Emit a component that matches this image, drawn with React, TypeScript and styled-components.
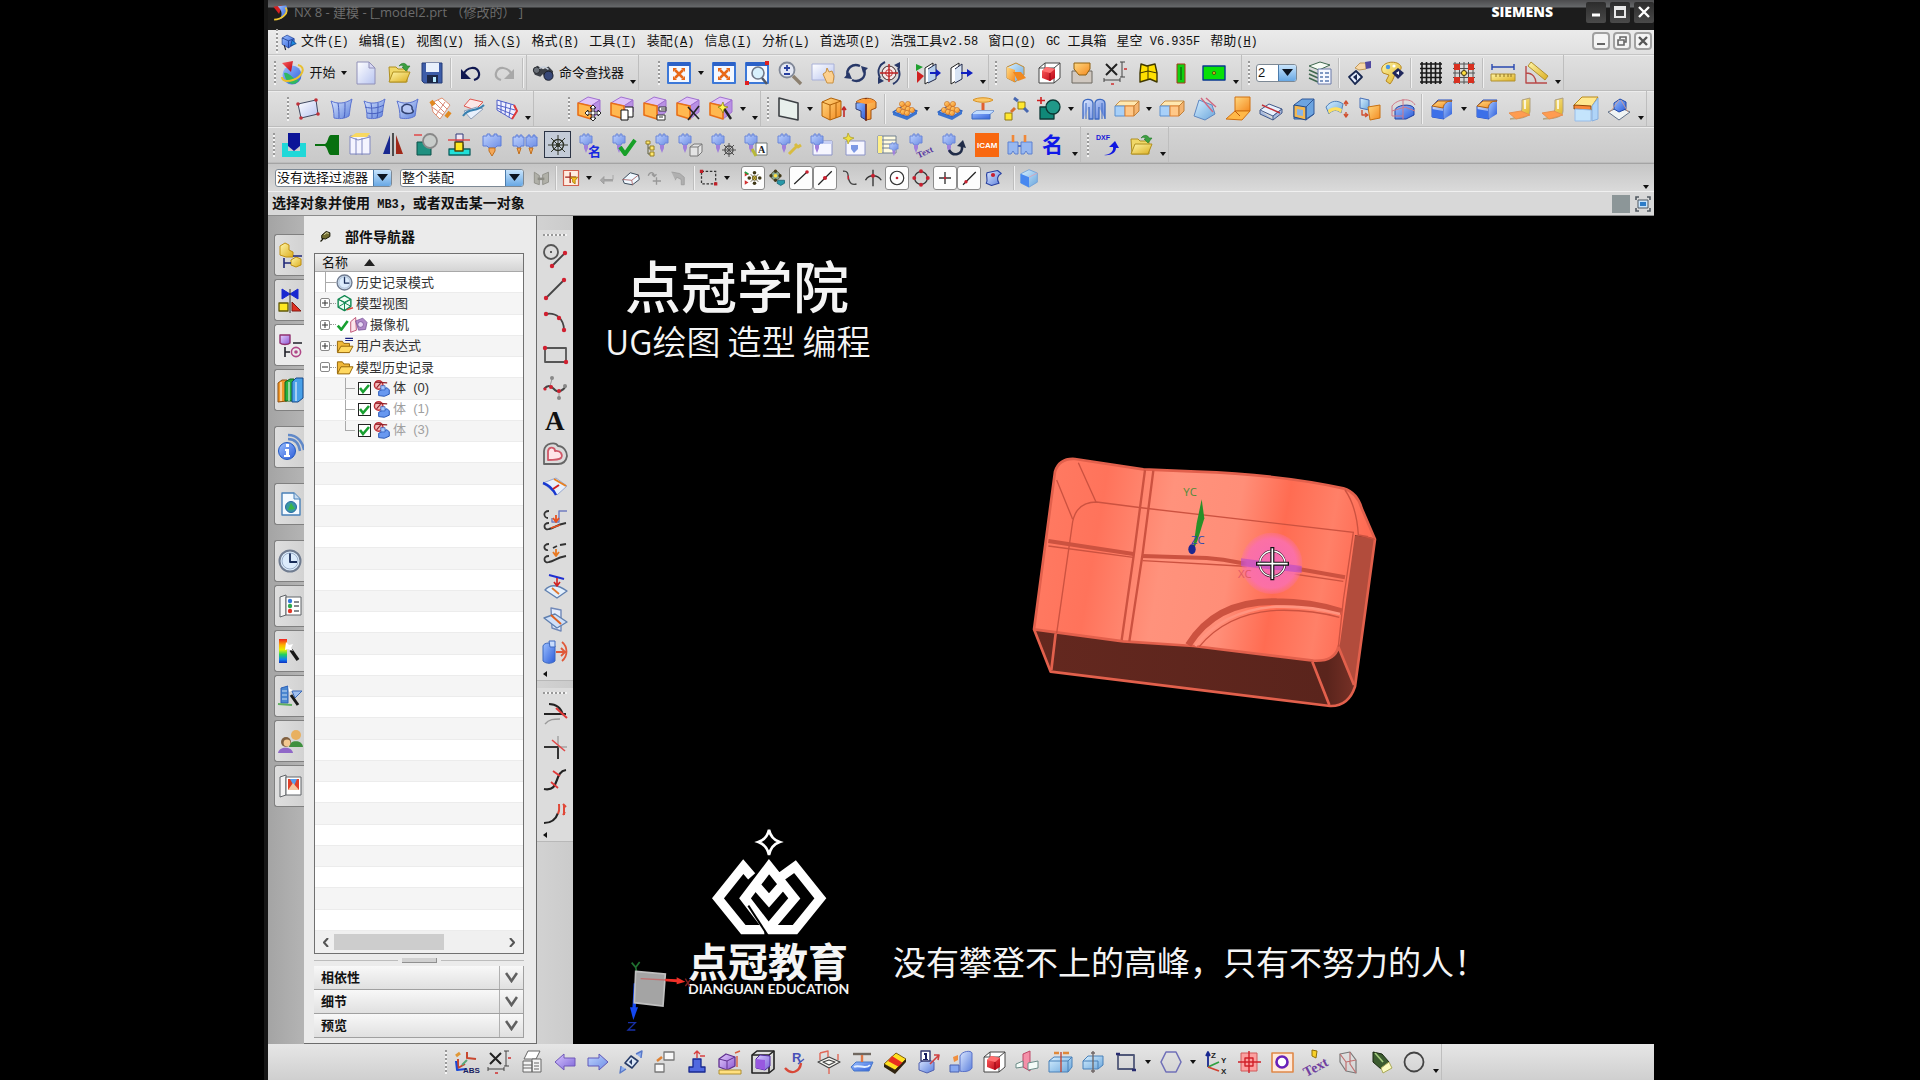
import React, { ReactNode } from 'react';
import styled, { createGlobalStyle, css } from 'styled-components';

const GlobalStyle = createGlobalStyle`
  * { box-sizing: border-box; }
  body { margin: 0; background: #000; }
  button { font: inherit; color: inherit; }
`;

const sans = '"Liberation Sans", "Noto Sans CJK SC", sans-serif';

/* ---------- drawing helpers ---------- */

const p = (d: string, fill = 'none', stroke = 'none', w = 1) => (
  <path d={d} fill={fill} stroke={stroke} strokeWidth={w} strokeLinejoin="round" />
);
const c = (cx: number, cy: number, r: number, fill = 'none', stroke = 'none', w = 1) => (
  <circle cx={cx} cy={cy} r={r} fill={fill} stroke={stroke} strokeWidth={w} />
);
const t = (x: number, y: number, size: number, fill: string, s: string, family = 'Liberation Sans') => (
  <text x={x} y={y} fontSize={size} fill={fill} fontWeight="bold" fontFamily={`"${family}", "Noto Sans CJK SC", sans-serif`}>{s}</text>
);

const Defs = styled.svg`
  position: absolute;
  width: 0;
  height: 0;
`;

const ramps: Record<string, [string, string]> = {
  blue: ['#dce8ff', '#5b7fdc'],
  mid: ['#c0d4ff', '#6c8ce4'],
  deep: ['#9cc0ff', '#2c5cd8'],
  orange: ['#ffd880', '#f48a20'],
  purple: ['#e6d0ff', '#8a55d0'],
  violet: ['#d9c8ff', '#7c63d8'],
  yellow: ['#fff6a8', '#dcae20'],
  gray: ['#f4f4f4', '#9c9c9c'],
  red: ['#ff6060', '#b80010'],
  sky: ['#d8f0ff', '#6aa6dc'],
  pale: ['#ffffff', '#b8c4f0'],
};

function Gradients() {
  return (
    <Defs aria-hidden="true">
      <defs>
        {Object.entries(ramps).map(([id, [a, b]]) => (
          <linearGradient key={id} id={id} x1="0" y1="0" x2="1" y2="1">
            <stop offset="0" stopColor={a} />
            <stop offset="1" stopColor={b} />
          </linearGradient>
        ))}
        <linearGradient id="rainbow" x1="0" y1="0" x2="0" y2="1">
          <stop offset="0" stopColor="#f02020" />
          <stop offset=".25" stopColor="#ffb000" />
          <stop offset=".45" stopColor="#e8f000" />
          <stop offset=".65" stopColor="#20d060" />
          <stop offset=".85" stopColor="#1080f0" />
          <stop offset="1" stopColor="#1030c0" />
        </linearGradient>
      </defs>
    </Defs>
  );
}

const u = (id: string) => `url(#${id})`;

const cube = (
  <>
    {p('M1 6L11 0L23 3L14 9Z', '#e0c4f8', '#a070d0')}
    {p('M14 9L23 3V15L14 22Z', '#b890e4', '#a070d0')}
    {p('M1 6L14 9V22L1 18Z', '#ffb850', '#e87018', 1.6)}
  </>
);
const clamp = (
  <>
    {p('M1 3H4V1H6V3H8V1H10V3H13V10H10L9 12H5L4 10H1Z', u('mid'), '#6a86d8')}
    {p('M5 12H9V15L7 20L5 15Z', '#a080dc')}
  </>
);
const fitFrame = (
  <>
    {p('M1 2H23V22H1Z', '#f4f8ff', '#3c78d8', 2)}
    {p('M1 1H23V5H1Z', '#2c62c8')}
  </>
);
const tray = (
  <>
    {p('M0 15L10 9L24 14L14 20Z', '#9cc4f4', '#2e62c0', 1.4)}
    {p('M0 15L14 20L24 14V17L14 23L0 18Z', '#3c74d0')}
    {[[6, 13], [11, 10], [10, 15], [15, 12], [19, 13], [14, 16], [9, 7], [15, 7]].map(([x, y]) => (
      <circle key={`${x}-${y}`} cx={x} cy={y} r="2.6" fill={u('orange')} stroke="#c05808" strokeWidth=".5" />
    ))}
  </>
);
const splitBox = (
  <>
    {p('M0 9L5 4H24L19 9Z', '#ffe8b0', '#c89048')}
    {p('M0 9H10V19H0Z', '#a8d0f8', '#5a90d0')}
    {p('M10 9H19V19H10Z', '#ffc888', '#e08030')}
    {p('M19 9L24 4V14L19 19Z', '#f4b470', '#c08038')}
  </>
);
const blend = (
  <>
    {p('M2 9L8 3H22L20 7C17 6 14 8 14 11V22L2 20Z', u('blue'), '#2850c0')}
    {p('M2 9L8 4H22C17 4 14 6 13 11L2 9Z', u('orange'), '#b06010')}
    {p('M14 22V11C14 7 17 5 22 5V17Z', u('deep'))}
    {p('M2 12L13 14V22L2 20Z', '#3c70e8')}
  </>
);
const fillet = (
  <>
    {p('M14 3L22 1V14C22 20 14 22 2 22C11 20 14 16 14 10Z', u('yellow'), '#b0a080')}
    {p('M1 16L13 14L22 18L8 22Z', '#ff9c50', '#e89050')}
    {p('M17 3V12', 'none', '#fff', 1.5)}
  </>
);
const boxRed = (
  <>
    {p('M2 7L8 2H23V17L17 22H2Z', '#fff', '#444')}
    {p('M2 7H17V22M17 7L23 2M8 2V8', 'none', '#444')}
    {p('M5 10L9 6L18 8V17L13 20L5 17Z', u('red'))}
    {p('M5 10L9 6L18 8L13 12Z', '#ff7070')}
    {p('M13 12V20', 'none', '#900010')}
  </>
);
const dims = (
  <>
    {p('M3 3L14 14M14 3L3 14', 'none', '#222', 2)}
    {p('M19 1V16M17 1H22M17 16H22M1 19H17M1 17V21M17 17V21', 'none', '#444')}
    {p('M21 8H24M8 23H11', 'none', '#d03030', 1.6)}
  </>
);
const folder = (
  <>
    {p('M2 6H9L11 8H20V21H3Z', '#f0d868', '#b09020')}
    {p('M2 21L6 11H23L19 21Z', u('yellow'), '#b09020')}
    {p('M12 5C15 1 19 2 20 5L23 5L19 10L15 6H17C16 4 14 4 12 5Z', '#3ca040', '#207828', 0.6)}
  </>
);
const surface = p('M2 4C8 7 16 7 23 2C21 9 21 14 20 19C15 22 10 22 5 21C5 15 4 9 2 4Z', u('blue'), '#5c74d0');
const sheetDoc = p('M3 8H22V22H3Z', '#f6f6ff', '#8c94c8');

const icons: Record<string, ReactNode> = {
  logo: <>{p('M2 4L14 2L10 14Z', '#d82020')}{p('M8 3L20 2C24 8 21 18 10 22C15 16 15 10 8 3Z', u('deep'))}{p('M19 5C25 12 14 22 3 22', 'none', '#f0c830', 2.5)}</>,
  part: <>{p('M3 7L10 3L20 8V16L12 21L3 16Z', u('deep'), '#153c98')}{p('M3 7L12 11L20 8M12 11V21', 'none', '#0f2f80')}{p('M17 10L23 15L15 18Z', '#1e8ae0', '#104080')}{p('M6 17L8 24', 'none', '#223', 1.6)}</>,
  start: <>{c(12, 14, 9.5, u('deep'))}{p('M4 12C9 10 14 20 19 19C15 26 6 24 4 12Z', '#30b860')}{p('M2 2L13 0L11 11Z', u('red'))}{p('M18 4C27 6 22 16 13 19C7 21 2 20 2 16', 'none', '#e8c030', 2)}</>,
  file: <>{p('M3 1H15L21 7V23H3Z', u('pale'), '#9090b8')}{p('M15 1V7H21Z', '#d8d8f4', '#9090b8')}</>,
  open: folder,
  save: <>{p('M2 2H22V22H4L2 20Z', '#3c5ca8', '#253c78')}{p('M6 2H19V11H6Z', '#e8f0fc')}{p('M7 14H18V22H7Z', '#1c2848')}{p('M13 16H16V21H13Z', '#b8ecff')}</>,
  undo: <>{p('M4 14C8 5 18 5 20 12C21 16 18 18 15 19', 'none', '#101850', 2.2)}{p('M2 8V18H12Z', '#101850')}</>,
  redo: <>{p('M20 14C16 5 6 5 4 12C3 16 6 18 9 19', 'none', '#a8a8a8', 2.2)}{p('M22 8V18H12Z', '#a8a8a8')}</>,
  binoculars: <>{p('M1 8L6 4L12 8L18 5L23 10L22 18L15 20L12 13L9 16L3 14Z', '#3c4048')}{c(18, 15, 5, '#384878', '#181c28')}{c(5, 9, 3.5, '#6a7078', '#24262c')}{p('M8 7L13 5L18 8', 'none', '#c8d0dc', 1.5)}</>,
  fit: <>{fitFrame}{p('M8 9L16 17M16 9L8 17', 'none', '#e86818', 2.5)}{p('M6 7H10L6 11ZM18 7V11L14 7ZM18 19H14L18 15ZM6 19V15L10 19Z', '#e86818')}</>,
  zoomWindow: <>{fitFrame}{c(13, 12, 6, '#d8f0fc', '#707888', 1.6)}{p('M17 17L22 23', 'none', '#505868', 2.5)}{p('M0 20H4V24H0ZM20 0H24V4H20Z', '#e02020')}</>,
  zoom: <>{c(9, 9, 7.5, '#e4e8f4', '#808898', 1.8)}{p('M15 15L23 23', 'none', '#8c8070', 3.4)}{p('M9 4V10M6 7H12M6 13H12', 'none', '#2840a0', 1.8)}</>,
  pan: <>{p('M1 3H23V19H1Z', u('pale'), '#a8b0d8')}{p('M12 13L15 11L16 7L18 11L21 10L23 15L22 22H16Z', '#fcd090', '#c89040')}</>,
  rotate: <>{p('M4 16C1 7 9 2 16 5M20 8C23 17 15 22 8 19', 'none', '#283868', 2.4)}{p('M19 12L24 7L17 5ZM0 17L5 11L8 18Z', '#283868')}</>,
  rotateTarget: <>{c(12, 12, 7, '#f4e8e8', '#402828')}{c(12, 12, 3.4, 'none', '#c03030')}{p('M12 3V21M3 12H21', 'none', '#c02020', 1.4)}{p('M3 17C-1 8 4 3 8 1M21 7C25 16 20 21 16 23', 'none', '#283868', 2)}{p('M17 4L23 1V8ZM7 20L1 23V16Z', '#283868')}</>,
  doorFlag: <>{p('M9 7L17 2V18L9 23Z', '#fff', '#202020')}{p('M12 8L20 3V18L12 22', '#b8d0ec', '#202848')}{p('M14 11H20V8L25 12L20 16V13H14Z', '#1020c0')}{p('M0 3L7 6L0 10Z', '#20a030')}{p('M1 10V22L8 15Z', '#d02020')}</>,
  door: <>{p('M2 7L10 2V18L2 23Z', '#fff', '#202020')}{p('M6 8L13 3V18L6 22', '#d8e4f4', '#202848')}{p('M12 11H18V8L24 12L18 16V13H12Z', '#1020c0')}</>,
  extract: <>{p('M3 6L12 2L20 6V14L11 21L3 17Z', u('sky'), '#c08830')}{p('M3 6L11 9V21L3 17Z', u('orange'))}{p('M9 11L17 11L22 17L14 20Z', '#f08820')}</>,
  boxRed,
  pocket: <>{p('M2 10H22V22H2Z', '#d0c8c0', '#6c6860')}{p('M4 2H20V8L16 14H9L4 8Z', u('orange'), '#906010')}</>,
  dims,
  yellowPart: <>{p('M5 3L11 5L19 3L21 12L21 21L14 18L4 21V12Z', '#ffe000', '#403800', 1.4)}{p('M4 12L12 10L21 12M12 4V19', 'none', '#403800')}</>,
  greenBar: <>{p('M8 3H16V22H8Z', '#10d010', '#a83818')}{p('M12 6V19', 'none', '#08480c')}</>,
  greenRect: <>{p('M1 5H23V19H1Z', '#08e008', '#083890', 1.4)}{c(12, 12, 1.6, '#e0b010', '#406010')}</>,
  layers: <>{p('M1 5L12 1L22 4L11 9Z', '#f6fcf4', '#406850')}{p('M1 9L10 13M1 13L10 17M1 17L10 21', 'none', '#406850', 1.6)}{p('M10 8H23V23H10Z', '#f6f8ff', '#6878a8')}{p('M12 12H15M17 12H21M12 16H15M17 16H21M12 20H15M17 20H21', 'none', '#5878b0', 1.4)}</>,
  handDiamond: <>{p('M2 16L9 10L15 16L8 23Z', '#e4ecfc', '#182850', 1.8)}{p('M6 16L10 13V20Z', '#182850')}{p('M8 7L13 2L19 2V8L12 9Z', '#f8d8a8', '#c09858')}{p('M18 1L24 0V7L19 8Z', '#5048a0')}</>,
  palette: <>{p('M3 12C-2 5 8 -1 17 2C24 5 21 10 17 11C14 12 15 17 10 23L6 20L9 14Z', u('yellow'), '#b88820')}{c(8, 6, 2.2, '#4898e8')}{c(14, 5, 1.6, '#fff')}{p('M12 12L18 7L24 12L18 18Z', '#20285c')}{p('M16 12L19 10V14Z', '#fff')}</>,
  grid: <>{p('M3 1V23M7.5 1V23M12 1V23M16.5 1V23M21 1V23M1 3H23M1 7.5H23M1 12H23M1 16.5H23M1 21H23', 'none', '#181818', 1.6)}</>,
  gridSnap: <>{p('M3 1V23M7.5 1V23M12 1V23M16.5 1V23M21 1V23M1 3H23M1 7.5H23M1 12H23M1 16.5H23M1 21H23', 'none', '#505050')}{p('M2 3H8V9H2ZM16 3H22V9H16ZM2 16H8V22H2ZM16 16H22V22H16Z', '#d83020')}{c(12, 12, 2.5, '#ffe040', '#403010')}</>,
  ruler: <>{p('M0 13H24V20H0Z', u('yellow'), '#b09030')}{p('M1 6H23M1 3V9M23 3V9', 'none', '#2848b0', 1.4)}{p('M5 13V16M9 13V16M13 13V16M17 13V16M20 13V16', 'none', '#907020')}</>,
  angle: <>{p('M7 1L24 15L21 19L4 5Z', u('yellow'), '#b09030')}{p('M2 5V22H23M2 12C9 12 12 17 12 22', 'none', '#b84848', 1.4)}</>,

  plane4: <>{p('M2 7L20 3L22 17L5 21Z', u('pale'), '#404860')}{[[2, 7], [20, 3], [22, 17], [5, 21]].map(([x, y]) => <circle key={x} cx={x} cy={y} r="1.8" fill="#c03038" />)}</>,
  surfRuled: <>{surface}{p('M9 6C10 12 10 17 10 21M16 6C16 12 16 17 15 21', 'none', '#4860c0')}</>,
  surfMesh: <>{surface}{p('M9 6C10 12 10 17 10 21M16 6C16 12 16 17 15 21M3 10C10 12 16 11 22 8M5 16C10 17 16 17 21 14', 'none', '#4860c0')}</>,
  surfN: <>{surface}{p('M7 10C11 5 18 8 17 12C22 17 10 18 7 14Z', '#b8c8f4', '#304070', 1.5)}</>,
  surfSwept: <>{p('M3 6L14 1L22 8L12 22L5 15Z', '#fff', '#e09070')}{p('M6 5L16 15M10 3L19 12M4 10L15 18M17 5L8 18', 'none', '#d88878')}{p('M3 4L6 8M22 15L18 20', 'none', '#e08820', 4)}</>,
  surfBlend: <>{p('M9 2L22 5L14 13L3 9Z', '#fce8e8', '#e05850')}{p('M3 14L16 10L22 12L10 22Z', '#e8f0fc', '#90a0b8')}{p('M2 19C8 10 15 16 23 8', 'none', '#3880b0', 2)}</>,
  surfGrid: <>{p('M3 3L20 8L23 14L18 22L3 13Z', '#f0f0ff', '#5060c8')}{p('M7 4L7 16M12 5L11 18M17 7L15 20M3 8L21 13M3 11L20 18', 'none', '#5060c8')}{p('M20 8L23 14L18 22', 'none', '#e03838', 2)}</>,
  cubeMove: <>{cube}{p('M16 8L19 11H17V15H21V13L24 16L21 19V17H17V21H19L16 24L13 21H15V17H11V19L8 16L11 13V15H15V11H13Z', '#fff', '#111', 0.9)}</>,
  cubeCopy: <>{cube}{p('M11 13H18V23H11ZM15 10H23V20H18', '#fff', '#111')}</>,
  cubeList: <>{cube}{p('M16 10H23V14H16ZM14 18H22V23H14Z', '#fff', '#333')}{p('M18 12H23M16 20H20', 'none', '#333')}</>,
  cubeDelete: <>{cube}{p('M12 10L23 22M23 9L12 23', 'none', '#222', 1.6)}</>,
  cubeWand: <>{cube}{p('M14 10L22 22', 'none', '#222', 2.4)}{p('M14 5L15 9L19 10L15 12L14 16L12 12L9 10L12 9Z', '#fff850', '#807810', 0.7)}</>,
  datum: p('M3 1L22 6V23L3 19Z', '#e8f0ec', '#3c4044', 1.6),
  extrude: <>{p('M1 5L10 1L20 4L20 19L9 23L1 19Z', u('orange'), '#b06008')}{p('M9 8V23M15 6V21M1 5L9 8L20 4', 'none', '#b06008')}{p('M23 20V11M21 13L23 10L25 13', 'none', '#c02828', 1.6)}</>,
  revolve: <>{p('M2 5C8 0 18 0 22 5V11L17 13V22L12 23V4Z', u('orange'), '#a05010')}{p('M2 6L12 5V23L7 20V14L2 12Z', u('deep'), '#303c70')}{p('M12 1V24', 'none', '#702010', 1.4)}{p('M2 5C8 1 18 1 22 5L12 7Z', '#ff9c38')}</>,
  tray,
  stamp: <>{p('M2 3C6 0 18 0 22 3C18 6 6 6 2 3Z', '#fcc868', '#d89020')}{p('M12 6V13', 'none', '#e06030', 3)}{p('M1 17L5 14H23L19 17V22H1Z', u('deep'), '#3868c0')}{p('M1 17L5 14H23L19 17Z', '#c0dcff')}</>,
  chain: <>{p('M1 16H8V23H1ZM14 5H21V12H14Z', '#ffe830', '#907810')}{p('M7 15L11 11', 'none', '#d87030', 3)}{p('M10 1L14 4M20 11L24 15', 'none', '#4868b0', 3)}</>,
  unite: <>{p('M3 10H17V22H3Z', '#108878', '#0c3834', 1.3)}{c(16, 10, 7, '#209888', '#0c3834', 1.3)}{p('M4 0V7M0 3.5H8', 'none', '#d02020', 1.6)}</>,
  rib: <>{p('M1 22V7C1 1 10 1 11 6V22H7V10M23 22V7C23 1 14 1 13 6V22H17V10', u('blue'), '#3c68c0', 1.3)}{p('M4 6V22M20 6V22', 'none', '#3c68c0')}</>,
  splitBox,
  sheet: <>{p('M6 3L19 8L22 17L12 23L1 19Z', u('sky'), '#6088c0')}{p('M8 1L20 15M13 1L23 10', 'none', '#d06880', 1.4)}</>,
  book: <>{p('M9 0H24V14H9Z', u('orange'), '#d07010')}{p('M0 22L9 14H24L16 23Z', '#ffb848', '#d07010')}{p('M9 14L14 19', 'none', '#c05808')}</>,
  slab: <>{p('M1 13L10 7L23 12L14 19Z', '#e8f0fc', '#405888')}{p('M1 13V17L14 23V19L23 12V16L14 23', '#a8bce0', '#405888')}{p('M3 8L21 16', 'none', '#c03038', 1.4)}</>,
  clipBox: <>{p('M2 8L10 2H22V17L14 22H2Z', '#6ca4e0', '#305898')}{p('M2 8L14 10V23L2 20Z', '#f4b850', '#204888')}{p('M5 12L11 13V19L5 18Z', '#88b4e8')}{p('M14 10L22 2M14 10V23L22 17', 'none', '#305898')}</>,
  bend: <>{p('M1 10C6 3 13 3 18 7L16 16C12 12 7 13 4 17Z', u('sky'), '#5080b8')}{p('M4 17C7 13 12 12 16 16L17 12C12 9 6 10 3 13Z', '#ffe060')}{p('M21 4V9M21 15V20M19 7L21 4L23 7M19 17L21 20L23 17', 'none', '#d05030', 1.4)}</>,
  offset: <>{p('M2 1L11 3V13L2 11Z', u('sky'), '#4870b8')}{p('M10 10L22 8V21L12 23Z', u('orange'), '#c87010')}{p('M4 13V18H9M7 16L10 18L7 20', 'none', '#d05030', 1.4)}</>,
  dome: <>{p('M4 20V13C5 8 20 6 23 11V18L15 22H4Z', u('deep'), '#2040a0')}{p('M1 19V9C6 2 20 0 24 8M1 14L14 10L24 14M12 2V22M1 19H12', 'none', '#d07888')}</>,
  blend,
  fillet,
  chamfer: <>{p('M0 8L8 0H24L18 9L18 13L0 9Z', '#ffe890', '#b88818')}{p('M0 8L17 9V13L0 12Z', '#f88838', '#904808')}{p('M1 12L17 13V24H1Z', '#c4e4fc', '#98bce8')}{p('M18 9L24 1V22L18 24Z', '#b0d4f8', '#88b0e0')}</>,
  cubePlane: <>{p('M1 15L12 10L23 15L12 23Z', '#f0f4f4', '#607088')}{p('M7 6L13 2L19 5V12L12 15L7 12Z', u('deep'), '#2048a8')}{p('M3 15L12 3M21 15L14 3', 'none', '#e0a080', 0.8)}</>,

  plunge: <>{p('M0 10H6V18H18V10H24V24H0Z', '#20d8d8')}{p('M6 0H18V13L12 18L6 13Z', '#0c1498')}</>,
  brush: p('M0 11H10C13 10 13 2 16 2H24V22H16C13 22 13 15 10 13H0Z', '#087010'),
  sheetBox: <>{p('M2 3H22V21H2Z', '#f4f4ff', '#8088c0')}{p('M8 5V22M14 5V22M2 4L10 7L22 4', 'none', '#8088c0')}{p('M2 4L8 0H22L19 4Z', '#f8d860')}</>,
  mirror: <>{p('M9 2V21H2Z', '#182890')}{p('M15 2V21H22Z', '#a02818')}{p('M12 0V23', 'none', '#181818', 1.4)}</>,
  subtract: <>{p('M3 9H17V22H3Z', '#209080', '#0c5048')}{c(16, 8, 7, '#c8ccca', '#888', 1.8)}{p('M0 2H8', 'none', '#e05050', 1.6)}</>,
  align: <>{p('M2 16H9V12H16V16H23V22H2Z', '#20e0d8', '#106060', 1.3)}{p('M8 9H16V18H8Z', '#ffe820', '#504008', 1.4)}{p('M9 1H16V8H9Z', '#f0e8f4', '#303878')}{p('M1 7H23', 'none', '#e04040', 1.4)}</>,
  spindle: <>{p('M3 3H7V1H10V3H14V1H17V3H21V13H17L15 15H9L7 13H3Z', u('mid'), '#5c7cd8')}{p('M9 15H15V18L12 23L9 18Z', '#f4a858', '#c07020')}</>,
  spindles: <>{p('M0 4H3V2H5V4H7V2H9V4H11V13H8L7 15H5L4 13H0ZM13 4H15V2H17V4H20V2H22V4H24V13H20L19 15H17L16 13H13Z', u('mid'), '#5c7cd8')}{p('M4 15H8L6 21ZM16 15H20L18 21Z', '#f4a858', '#c07020')}</>,
  wheel: <>{c(12, 12, 5.5, 'none', '#303428', 1.4)}{p('M12 2V22M2 12H22M5 5L19 19M19 5L5 19', 'none', '#303428')}{c(12, 12, 2, '#303428')}</>,
  clampName: <>{clamp}{t(9, 23, 13, '#1828e0', '名')}</>,
  clampCheck: <>{clamp}{p('M8 14L13 21L23 7', 'none', '#18a028', 4)}</>,
  clampTree: <><g transform="translate(10 0)">{clamp}</g>{p('M1 8H5V11H1ZM5 13H9V17H5ZM5 19H9V23H5Z', '#ffe870', '#988020')}{p('M3 11V21H5M3 15H5', 'none', '#606040')}</>,
  clampBox: <>{clamp}{p('M12 14L16 11H24V19L20 23H12Z', '#e4e4e4', '#787878')}{p('M12 14H20V23M20 14L24 11', 'none', '#787878')}</>,
  clampGear: <>{clamp}{c(18, 17, 4, 'none', '#505050', 1.4)}{p('M18 10V24M11 17H25M13 12L23 22M23 12L13 22', 'none', '#505050')}</>,
  clampA: <>{clamp}{p('M12 10H23V22H12Z', '#fff', '#707878')}{t(14, 20, 10, '#222', 'A', 'Liberation Serif')}{p('M8 16L12 23', 'none', '#b8b838', 3)}</>,
  clampWrench: <>{clamp}{p('M12 21L20 13M18 11L21 14L24 12', 'none', '#d8bc40', 3)}</>,
  clampWindow: <>{sheetDoc}{p('M3 8H22V11H3Z', '#c8d0f4')}{clamp}</>,
  windowStar: <>{sheetDoc}{p('M5 0L7 4L11 5L7 7L5 11L4 7L0 5L4 4Z', '#f0e040', '#a09010', 0.6)}{p('M8 12H15V16L11 20L8 16Z', '#7c98e4')}</>,
  clampTable: <>{p('M2 3H20V20H2Z', '#fffbe0', '#708090')}{p('M2 7H20M2 11H20M2 15H20M7 3V20', 'none', '#708090')}{p('M2 3H6V20H2Z', '#fff088')}<g transform="translate(13 9) scale(.7)">{clamp}</g></>,
  clampText: <>{clamp}<g transform="rotate(-25 16 18)">{t(7, 22, 9, '#5838a0', 'Text', 'Liberation Serif')}</g></>,
  clampReturn: <>{clamp}{p('M7 17C11 24 21 22 20 13', 'none', '#202c48', 2.6)}{p('M15 13L21 7L24 15Z', '#202c48')}</>,
  icam: <>{p('M0 0H24V24H0Z', '#f86810')}{t(2, 15, 8, '#fff', 'ICAM')}</>,
  twin: <>{p('M0 9H10V21H7L5 18L3 21H0ZM13 9H24V21H20L18 18L16 21H13Z', '#98b8f0', '#5c80d0')}{p('M5 2V9M17 2V9', 'none', '#f08838', 2.6)}{p('M10 13H13', 'none', '#4c70c8', 2)}</>,
  name: t(1, 19, 21, '#1018e8', '名'),
  dxf: <>{t(0, 7, 7, '#1818d8', 'DXF')}{p('M8 22C14 22 18 18 17 14H13L19 8L23 15H20C20 20 14 23 8 22Z', '#1018e0')}</>,

  sLink: <>{p('M4 5L10 9V20L4 18ZM14 8L21 5V17L14 20Z', '#b0b0a8', '#8c8c84')}{p('M8 13H16', 'none', '#8c8c84', 3)}</>,
  sSnap: <>{p('M3 3H21V21H3Z', '#ffece0', '#d06050', 1.4)}{p('M11 5V18M5 11H18', 'none', '#a02018', 1.6)}{p('M11 11H20L17 15V19L14 17V14Z', '#f8c020', '#a07808')}</>,
  sReturn: p('M20 8V14H8V10L3 15L8 20V16H20', '#a8a8a8', '#989898'),
  sSolid: <>{p('M1 14L11 5L22 8L23 14L14 21L3 19Z', '#f0f8ff', '#384858', 1.3)}{p('M1 14L13 15L22 8M13 15L14 21', 'none', '#a04848')}</>,
  sMove: p('M3 9C5 3 10 4 11 9M8 7L11 10L14 7M14 11V21M9 16H20', 'none', '#989898', 1.8),
  sGun: p('M2 4L13 6L19 11V21H15V14L9 11L7 15', '#b0b0b0', '#989898'),
  sMarquee: <>{<path d="M3 4H20V19H3Z" fill="none" stroke="#333" strokeWidth="1.5" strokeDasharray="3 2" />}{p('M1 2H5V6H1ZM18 17H22V21H18Z', '#c02028')}</>,
  mFlag: <>{p('M1 4L6 7L1 10ZM1 15L6 18L1 21Z', '#d03030')}{p('M1 4L6 7', 'none', '#20a040', 2)}{[[14, 5], [14, 19], [7, 12], [21, 12]].map(([x, y]) => <circle key={`${x}${y}`} cx={x} cy={y} r="2.4" fill="#403818" />)}{c(14, 12, 3, '#ffe040', '#403818')}{p('M9 7L19 17M19 7L9 17', 'none', '#403818')}</>,
  mGlobe: <>{c(10, 9, 6, '#88a890', '#484020')}{[[10, 3], [4, 9], [16, 9], [10, 15]].map(([x, y]) => <circle key={`${x}${y}`} cx={x} cy={y} r="2.2" fill="#403818" />)}{c(10, 9, 2.4, '#ffe040')}{p('M13 15H22V19L17 22L12 19Z', '#2898a8', '#186070')}</>,
  mEnd: <>{p('M3 20L20 4', 'none', '#222', 1.6)}{c(20, 4, 2.4, '#c82030')}</>,
  mMid: <>{p('M3 21L21 3', 'none', '#222', 1.6)}{c(12, 12, 2.8, '#c82030')}</>,
  mCurve: <>{p('M4 3C14 2 9 12 13 17C15 21 18 21 22 20', 'none', '#444', 1.8)}{p('M11 9V14', 'none', '#c82030', 2)}</>,
  mCross: <>{p('M12 1V23M2 15C6 7 18 7 23 15', 'none', '#333', 1.8)}{c(12, 9, 2.6, '#c82030')}</>,
  mCenter: <>{c(12, 12, 9, '#fff', '#333', 1.6)}{c(12, 12, 1.8, '#c82030')}</>,
  mQuad: <>{c(12, 12, 8.5, 'none', '#333', 1.6)}{[[12, 3], [12, 21], [3, 12], [21, 12]].map(([x, y]) => <circle key={`${x}${y}`} cx={x} cy={y} r="2.6" fill="#c82030" />)}</>,
  mPoint: <>{p('M12 4V20M4 12H20', 'none', '#333', 1.8)}{c(12, 12, 1.6, '#c82030')}</>,
  mOn: <>{p('M4 21L21 4', 'none', '#222', 1.6)}{c(8, 17, 2.2, '#c82030')}</>,
  mFace: <>{p('M4 5L18 2L23 6C17 9 17 14 20 19L10 22L3 19C6 14 2 10 4 5Z', u('blue'), '#2840a0', 1.5)}{c(12, 8, 2.8, '#c82030')}</>,
  mBox: <>{p('M2 7L12 2L22 6V17L12 23L2 18Z', u('sky'), '#70a0d8')}{p('M2 7L12 11V23L2 18Z', '#4888f0')}{p('M12 11L22 6', 'none', '#e0a0b0')}</>,

  rAssembly: <>{p('M2 3L7 0L11 2V7L15 9V14L8 14L2 12Z', u('yellow'), '#c09010')}{p('M13 17L18 14L23 16V22L18 24L13 22Z', u('yellow'), '#c09010')}{p('M6 15V25M6 20H13M15 13H24', 'none', '#202878', 1.6)}</>,
  rConstraint: <>{p('M4 1L12 6L4 11ZM20 1L12 6L20 11Z', '#1828d0', '#1828d0')}{p('M1 15H10V23H1Z', '#ffe820', '#605808', 1.3)}{p('M14 14L23 23H14Z', '#e03020', '#801810')}{p('M12 1V25', 'none', '#333')}</>,
  rPart: <>{p('M2 2H12V10C10 12 4 12 2 10Z', u('purple'), '#903070', 1.4)}{p('M15 10H24M7 14V24M7 19H12', 'none', '#202028', 1.6)}{c(18, 19, 4.6, 'none', '#b04888', 1.6)}{c(18, 19, 1.8, '#b04888')}</>,
  rBooks: <>{p('M0 5L4 2H9V23L0 24Z', '#f09828', '#905010')}{p('M7 4L12 1H16V23H7Z', '#28b040', '#106020')}{p('M14 4L18 0H25V20L20 24H14Z', '#48a0e8', '#184888')}{p('M3 4V23M11 4V23M18 4V23', 'none', '#fff', 1)}</>,
  rInfo: <>{c(9, 16, 8.5, u('deep'), '#2058c0')}{p('M8 9H11V12H8ZM7 14H11V20H12V22H6V20H8V16H7Z', '#fff')}{p('M10 4C18 4 21 9 22 16M10 0C20 0 25 8 26 15', 'none', '#6088c8', 2.4)}</>,
  rWeb: <>{p('M4 1H16L22 7V23H4Z', '#f4faff', '#4880b8', 1.4)}{p('M16 1V7H22', '#c8dcf0', '#4880b8')}{c(13, 15, 5.5, '#3898a0', '#2868a8')}{p('M10 18L13 11L17 17Z', '#38b848')}</>,
  rClock: <>{c(12, 12, 10.5, '#dcecfc', '#707c90', 2)}{p('M12 4V13H19', 'none', '#182c58', 1.8)}{c(12, 12, 8, 'none', '#8ca0bc', 0.8)}</>,
  rList: <>{p('M2 3L8 1V21L2 23Z', '#f4f4f4', '#606468')}{p('M8 3H23V21H8Z', '#fff', '#606468')}{c(12, 7, 2.2, '#3878d8')}{c(12, 12, 2.2, '#30a850')}{c(12, 17, 2.2, '#e03828')}{p('M16 8H21M16 12H21M16 17H21', 'none', '#606468', 1.3)}</>,
  rRainbow: <>{p('M1 0H9V24H1Z', u('rainbow'))}{p('M13 11L20 21', 'none', '#181818', 3.4)}{p('M8 3L11 6L15 5L13 9L15 12L10 10L7 11Z', '#fff')}</>,
  rBuild: <>{p('M3 4L10 2V19H3Z', '#4c88d0', '#2c60b8')}{p('M4 7H9M4 11H9M4 15H9', 'none', '#c8dcf4')}{p('M14 7H24L17 14Z', '#a0c0f0', '#3868b8')}{p('M13 11L20 21', 'none', '#181818', 3)}{p('M0 20L14 21', 'none', '#60b060', 2)}{p('M10 1L12 5L15 6L11 8Z', '#fff')}</>,
  rUsers: <>{c(18, 6, 5, '#e8b060')}{p('M11 18C11 11 24 10 25 18Z', '#409040')}{c(8, 13, 5, '#806040')}{c(9, 14, 3.4, '#f4c890')}{p('M0 24C1 17 14 17 15 24Z', '#9068c8')}</>,
  rPhoto: <>{p('M2 3L8 1V21L2 23Z', '#f4f4f4', '#606468')}{p('M8 3H23V21H8Z', '#fff', '#606468')}{p('M10 5H21V16H10Z', '#e04028')}{p('M12 5H19L16 12Z', '#58a0f0')}{p('M10 16L15 9L21 16Z', '#f4c8a0')}</>,

  vCircle: <>{c(8, 8, 7, 'none', '#555', 1.8)}{c(8, 8, 1, '#333')}{p('M9 22L22 9', 'none', '#444', 1.8)}{c(9, 22, 2.2, '#d02030')}{c(22, 9, 2.2, '#d02030')}</>,
  vLine: <>{p('M3 21L21 3', 'none', '#444', 1.8)}{c(3, 21, 2.2, '#d02030')}{c(21, 3, 2.2, '#d02030')}</>,
  vArc: <>{p('M3 4C13 2 21 9 21 20', 'none', '#444', 1.8)}{c(3, 4, 2.2, '#d02030')}{c(16, 8, 2.2, '#d02030')}{c(21, 20, 2.2, '#d02030')}</>,
  vRect: <>{p('M2 5H23V19H2Z', 'none', '#555', 1.8)}{c(2, 5, 2.2, '#d02030')}{c(23, 19, 2.2, '#d02030')}</>,
  vSpline: <>{p('M1 13C6 7 9 11 12 14S20 15 23 10', 'none', '#444', 2)}{p('M7 10L9 3M16 14L16 22', 'none', '#999')}{c(8, 11, 2, '#d02030')}{c(16, 15, 2, '#d02030')}{c(9, 2, 2, '#888')}{c(22, 10, 2, '#888')}{c(16, 22, 2, '#888')}{c(2, 13, 1.6, '#d02030')}</>,
  vText: t(2, 21, 27, '#111', 'A', 'Liberation Serif'),
  vOffset: <>{p('M1 22V9C2 0 13 0 15 4C21 4 24 10 24 14C23 20 19 22 15 22Z', 'none', '#666', 1.8)}{p('M5 18V9C6 4 12 5 12 9C18 8 20 13 18 16C16 18 12 18 5 18Z', '#ffe4e8', '#d05868', 1.8)}</>,
  vBridge: <>{p('M0 8L13 3L24 11L14 20Z', '#e8f0fc', '#98a8d0')}{p('M0 8C6 10 10 14 13 20', 'none', '#1838d0', 2.4)}{p('M11 4L23 11', 'none', '#e88020', 2)}{p('M10 14L16 10', 'none', '#d02020', 2)}</>,
  vJoin: <>{p('M6 3C-1 3 1 10 5 10M6 15C-1 15 1 23 6 21C12 20 12 17 23 15', 'none', '#333', 1.8)}{p('M9 10V14H16V3H24', 'none', '#707cc0', 1.4)}{p('M13 7V13M10 10L13 14L16 10M8 20L17 17', 'none', '#e85020', 1.8)}</>,
  vSplit: <>{p('M6 3C-1 3 1 10 5 9M10 7L14 5M17 4L23 3M6 15C-1 15 1 23 6 21C12 20 12 17 23 15', 'none', '#333', 1.8)}{p('M13 8V14M10 11L13 15L16 11', 'none', '#e87820', 1.8)}</>,
  vProject: <>{p('M6 1L21 5', 'none', '#2030d0', 2)}{p('M2 16C7 10 14 10 24 17L14 24Z', '#e4f0fc', '#6080b0', 1.4)}{p('M14 4V11M11 8L14 12L17 8', 'none', '#d02020', 1.6)}{p('M9 14L16 20', 'none', '#e07830', 1.8)}</>,
  vIntersect: <>{p('M8 1L18 3V24L9 21Z', '#e4ecfc', '#7088b8', 1.4)}{p('M1 11L12 7L24 15L14 21Z', '#d0e0f8', '#6080b0', 1.4)}{p('M8 8L18 17', 'none', '#e06020', 2)}</>,
  vWrap: <>{p('M0 6C1 2 10 2 12 6V21C9 24 3 24 0 21Z', u('deep'), '#3c68c0')}{p('M6 1H12V7H7Z', '#c8dcfc', '#3c68c0')}{p('M19 2C25 7 25 16 19 21M13 12H22M18 8L22 12L18 16', 'none', '#e05838', 1.8)}</>,
  vTrim1: <>{p('M6 2C14 2 18 6 20 13M1 12H23', 'none', '#222', 2)}{p('M13 6L24 16', 'none', '#e03838', 2)}{p('M2 22C6 17 11 17 17 17', 'none', '#999', 1.4)}</>,
  vTrim2: <>{p('M1 12H15V24', 'none', '#333', 2)}{p('M15 1V10M15 12H24', 'none', '#888')}{p('M9 5L22 16', 'none', '#e04848', 1.6)}</>,
  vTrim3: <>{p('M1 21C18 24 10 4 23 2', 'none', '#222', 2.2)}{p('M10 3L17 8M8 14L15 20', 'none', '#e03838', 1.8)}</>,
  vTrim4: <>{p('M1 22C8 22 13 18 15 12', 'none', '#222', 2.2)}{p('M15 13C17 9 16 6 16 3M21 4V14M20 3L23 6M20 14L22 11', 'none', '#e04838', 2)}</>,

  bCsys: <>{p('M4 9V18L11 14M13 2V8L22 9', 'none', '#c84830', 2)}{p('M2 11L3 20L12 19', 'none', '#1848d8', 2)}{p('M2 6L6 3', 'none', '#e09838', 3)}{p('M8 15L13 10', 'none', '#58a878', 2)}{t(9, 23, 8, '#182060', 'ABS')}</>,
  bLayers: <>{p('M8 1H20L16 9H4Z', '#fff', '#666')}{p('M3 11H12V22H3ZM12 9H21V22H12Z', '#f4f4f4', '#666')}{p('M3 15H12M3 18H12M14 13H19M14 16H19M14 19H19', 'none', '#666', 1.2)}</>,
  bLeft: p('M2 12L11 4V8H22V16H11V20Z', u('violet'), '#7058b8'),
  bRight: p('M22 12L13 4V8H2V16H13V20Z', u('mid'), '#6058b8'),
  bSwap: <>{p('M6 13L12 6L19 11L13 18Z', '#dce8f8', '#283c68', 1.6)}{p('M10 12L13 9V15Z', '#283c68')}{p('M17 4L23 1L22 8M7 19L1 23L2 16', '#90b0f0', '#5878c8', 1.4)}</>,
  bSquares: <>{p('M12 2H22V10H12ZM3 14H12V22H3Z', '#f8f8f8', '#777', 1.3)}{p('M5 11L10 7', 'none', '#e08030', 2.4)}</>,
  bTower: <>{p('M8 9H16V17H20V22H4V17H8Z', '#5068e0', '#182890', 1.3)}{p('M12 1V8M9 4L12 1L15 4M15 6H20', 'none', '#d84040', 1.4)}</>,
  bMeasure: <>{p('M1 9L8 4L17 7V16L9 20L1 17Z', u('purple'), '#603090', 1.3)}{p('M1 9L9 11V20M9 11L17 7', 'none', '#603090')}{p('M1 20H23V24H1Z', '#ffe080', '#b09030')}{p('M19 6V17M17 3L22 1', 'none', '#d86040', 1.4)}</>,
  bCubeFrame: <>{p('M1 5L6 1H23V19L18 23H1Z', 'none', '#222', 1.6)}{p('M1 5H18V23M18 5L23 1', 'none', '#222', 1.6)}{p('M5 9L9 5L19 6V16L14 20L5 18Z', u('violet'), '#5028a0')}{p('M5 9L14 10V20L5 18Z', '#9858e0')}</>,
  bRadius: <>{p('M1 18C8 26 16 21 17 13', 'none', '#d84838', 2.4)}{p('M14 14L20 9', 'none', '#4858b8', 1.4)}{t(8, 12, 13, '#4850b8', 'R')}</>,
  bBoxLines: <>{p('M1 12L12 7L23 12L12 18ZM6 12L12 10L18 12L12 15Z', '#f8f8f4', '#444', 1.2)}{p('M3 3V10M3 3L11 1V7M21 4V10M12 18V24', 'none', '#e06858', 1.4)}</>,
  bPlate: <>{p('M1 17L6 12H23L19 21H4Z', u('deep'), '#4878c8')}{p('M4 17C8 14 16 20 20 15', 'none', '#e4f0ff', 2)}{p('M3 4H21', 'none', '#706860', 2.4)}{p('M12 5V12', 'none', '#e07848', 2.4)}</>,
  bStripes: <>{p('M1 14L13 3L23 9L12 20Z', '#ffe020', '#806010')}{p('M5 11L16 17L20 13L9 6Z', '#e83020')}{p('M1 14L12 20L23 9V12L12 24L1 17Z', '#302410')}</>,
  bInfo: <>{p('M3 13L10 9L18 12V20L11 23L3 20Z', u('blue'), '#5060b0')}{p('M5 1H14V11H5Z', '#fff', '#333870', 1.4)}{p('M8 3H11V9H12V10H7V9H9V5H8Z', '#182060')}{p('M14 14L22 6M18 5L23 5L22 10', 'none', '#d04040', 1.6)}</>,
  bTube: <>{p('M11 6C13 1 22 0 23 3V18C21 22 13 22 11 21Z', u('blue'), '#5870c8')}{p('M1 15H10V22H1Z', '#88a8f0', '#4860b0')}{p('M4 7L9 5V10L5 12Z', '#f09040')}</>,
  bPlane: <>{p('M8 4L15 1V21L8 17Z', '#f490a8', '#c04868')}{p('M13 13L23 11V18L13 20ZM1 14L8 11V17L1 18Z', '#f4fcf8', '#6c8c88')}</>,
  bCut: <>{p('M1 11L6 7H24V17L20 22H1Z', u('sky'), '#4880b8')}{p('M1 11H20V22M20 11L24 7', 'none', '#4880b8')}{p('M13 2V22', 'none', '#c04838', 1.4)}{p('M6 3H11M15 3H21', 'none', '#e08838', 2.4)}</>,
  bMid: <>{p('M2 11L7 6H22V15L17 19H2Z', u('sky'), '#4880b8')}{p('M2 11H17V19', 'none', '#4880b8')}{p('M12 1V23M10 3H14M10 21H14', 'none', '#706868', 1.4)}</>,
  bRect: <>{p('M4 5H20V19H4Z', 'none', '#505878', 1.8)}{p('M2 4H6M18 20H22', 'none', '#282c70', 2.4)}</>,
  bHex: p('M7 2H17L22 12L17 22H7L2 12Z', 'none', '#7070b8', 1.6),
  bXyz: <>{p('M4 17V3M2 6L4 2L6 6', 'none', '#182890', 1.8)}{p('M4 17L15 12', 'none', '#30a040', 1.8)}{p('M4 17L15 21', 'none', '#d04030', 1.8)}{t(7, 8, 8, '#222', 'Z')}{t(17, 13, 8, '#222', 'Y')}{t(17, 24, 8, '#222', 'X')}</>,
  bTarget: <>{p('M4 3H20V21H4Z', '#fca0a0', '#d05858')}{p('M12 1V23M1 12H24M8 8H16V16H8Z', 'none', '#d02028', 1.4)}</>,
  bHole: <>{p('M2 3H23V22H2Z', '#ffe8d8', '#e08848', 1.6)}{c(12, 12, 5.5, '#fff', '#6820b8', 2.6)}</>,
  bText: <><g transform="rotate(-28 12 18)">{t(0, 22, 14, '#7040a0', 'Text', 'Liberation Serif')}</g>{p('M9 0L14 1L13 8L9 6Z', '#f8d028', '#907008')}</>,
  bWire: <>{p('M4 4L14 2L20 10V23L10 21L4 12Z', 'none', '#777', 1.2)}{p('M4 4L10 12L20 10M10 12V21M14 2V14L20 23', 'none', '#c07070', 1.2)}</>,
  bLamp: <>{p('M4 2L13 4L20 12L12 19L4 12Z', '#3c5c30', '#182810')}{p('M12 18L20 12L23 18L14 23Z', '#fcfcc0', '#a8a858')}{p('M6 3L14 12', 'none', '#a8d080', 1.6)}</>,
  bCircle: c(12, 12, 9.5, 'none', '#444', 1.8),

  pin: <>{p('M6 10L13 4L19 6V12L12 16L6 15Z', '#706c30', '#181808', 1.6)}{p('M8 16L4 20', 'none', '#181808', 2)}{p('M10 9L14 6L17 7', 'none', '#e8e4b0', 1.6)}</>,
  tViews: <>{p('M3 6L12 1L21 6V16L12 22L3 17Z', '#f0fcf4', '#108850', 2)}{p('M3 6L12 10L21 6M12 10V22M3 17L21 6M3 6L21 16', 'none', '#108850', 1.4)}{p('M15 21L24 18', 'none', '#e04838', 2)}</>,
  tTick: p('M3 13L9 20L20 5', 'none', '#18a030', 4.5),
  tCamera: <>{p('M1 8L8 2L9 20L1 23Z', '#fce4ec', '#c05878', 1.4)}{p('M8 7L18 3L24 9L22 19L12 20Z', '#b088c8', '#704890')}{c(15, 12, 4, '#e8d8f4', '#704890')}</>,
  tFolder: <>{p('M2 4H9L11 7H19V20H2Z', '#f0b838', '#98680c', 1.4)}{p('M2 21L7 11H24L19 21Z', '#ffd860', '#98680c', 1.4)}</>,
  tExpr: <>{p('M2 6H9L11 9H19V21H2Z', '#f0b838', '#98680c', 1.4)}{p('M2 22L7 13H24L19 22Z', '#ffd860', '#98680c', 1.4)}{p('M13 2H24M13 5H24', 'none', '#182080', 1.6)}</>,
  tBody: <>{c(8, 7, 6, '#f4b8b8', '#c03038', 2)}{p('M3 3L20 4M5 11L12 3', 'none', '#902028', 1.6)}{p('M8 16L15 12L20 11L23 14V20L16 23L8 22Z', '#6898f0', '#2858b8', 1.4)}{p('M11 8H17V14H11Z', '#a8c8fc', '#2858b8')}</>,
};

const IconSvg = styled.svg<{ $size: number }>`
  width: ${(q) => q.$size}px;
  height: ${(q) => q.$size}px;
  display: block;
  flex: none;
  overflow: visible;
`;

function Icon({ name, size = 24 }: { name: string; size?: number }) {
  return (
    <IconSvg $size={size} viewBox="0 0 24 24" aria-hidden="true">
      {icons[name]}
    </IconSvg>
  );
}

/* ---------- window frame ---------- */

const Stage = styled.main`
  min-height: 100vh;
  padding: 0 266px 0 264px;
  display: flex;
  background: #000;
  font: 13px/20px ${sans};
  color: #111;
`;
const Frame = styled.div`
  flex: 1;
  min-width: 0;
  display: flex;
  flex-direction: column;
  border-left: 4px solid #161616;
  background: #d6d6d6;
`;
const TitleBar = styled.header`
  height: 30px;
  display: flex;
  align-items: center;
  padding: 0 0 6px 4px;
  gap: 5px;
  background: linear-gradient(#4c4c4e 0, #66686a 7px, #1c1c1c 8px, #1c1c1c 100%);
`;
const Title = styled.h1`
  margin: 0;
  flex: 1;
  font: 400 13px/24px "Open Sans", "Noto Sans CJK SC", sans-serif;
  color: #6c6c6c;
  white-space: pre;
`;
const Brand = styled.span`
  font: 800 14px/24px "Open Sans", sans-serif;
  color: #fff;
  margin-right: 28px;
`;
const FrameButton = styled.button`
  width: 20px;
  height: 21px;
  padding: 0;
  border: 0;
  border-radius: 2px;
  background: linear-gradient(#2c2c2c, #4a4a4a);
  display: grid;
  place-items: center;
`;
const FrameButtons = styled.div`
  display: flex;
  gap: 4px;
`;
const MenuBar = styled.nav`
  height: 25px;
  display: flex;
  align-items: center;
  padding: 0 2px 2px 4px;
  background: linear-gradient(#ebebeb, #e0e0e0);
  border-bottom: 1px solid #c4c4c4;
`;
const Menus = styled.ul`
  flex: 1;
  margin: 0 0 0 4px;
  padding: 0;
  list-style: none;
  display: flex;
  gap: 10px;
`;
const MenuButton = styled.button`
  border: 0;
  padding: 0;
  background: none;
  font: 13px/20px ${sans};
  white-space: pre;
`;
const Latin = styled.span`
  font-family: "Liberation Mono", monospace;
  font-size: 12px;
`;
const DocButton = styled.button`
  width: 18px;
  height: 18px;
  padding: 0;
  border: 2px solid #a0a0a0;
  border-radius: 4px;
  background: #f4f4f4;
  display: grid;
  place-items: center;
`;
const DocButtons = styled.div`
  display: flex;
  gap: 3px;
`;

/* ---------- toolbars ---------- */

const ToolRow = styled.div<{ $indent?: number; $sunk?: boolean }>`
  height: 36px;
  display: flex;
  gap: 2px;
  padding-left: ${(q) => q.$indent ?? 2}px;
  background: ${(q) => (q.$sunk ? 'linear-gradient(#d4d4d4, #c9c9c9)' : 'linear-gradient(#e0e0e0, #d2d2d2)')};
  border-bottom: 1px solid #bcbcbc;
  box-shadow: inset 0 1px #ececec;
`;
const Group = styled.div<{ $vertical?: boolean }>`
  display: flex;
  align-items: center;
  flex: none;
  ${(q) =>
    q.$vertical
      ? css`
          flex-direction: column;
          border-bottom: 1px solid #b8b8b8;
          background: #dcdcdc;
        `
      : css`
          border-right: 1px solid #bebebe;
        `}
`;
const Grip = styled.span<{ $vertical?: boolean }>`
  flex: none;
  ${(q) =>
    q.$vertical
      ? css`
          width: 24px;
          height: 2px;
          margin: 4px 0 3px;
          background: repeating-linear-gradient(90deg, #999 0 2px, #f4f4f4 2px 4px);
        `
      : css`
          width: 2px;
          height: 24px;
          margin: 0 2px 0 4px;
          background: repeating-linear-gradient(#999 0 2px, #f4f4f4 2px 4px);
        `}
`;
const Divider = styled.span<{ $h?: number }>`
  width: 2px;
  height: ${(q) => q.$h ?? 30}px;
  margin: 0 2px;
  flex: none;
  background: linear-gradient(90deg, #bebebe 50%, #f0f0f0 50%);
`;
const ToolButton = styled.button<{ $w?: number; $pressed?: boolean; $framed?: boolean }>`
  width: ${(q) => q.$w ?? 33}px;
  height: ${(q) => q.$w ?? 33}px;
  flex: none;
  padding: 0;
  border: 0;
  background: none;
  display: grid;
  place-items: center;
  ${(q) =>
    q.$pressed &&
    css`
      background: #fdfdfd;
      border: 1px solid #8c8c8c;
      border-radius: 3px;
    `}
  ${(q) =>
    q.$framed &&
    css`
      width: 27px;
      height: 27px;
      margin: 0 3px;
      background: #c4ccd8;
      border: 1px solid #2c3444;
    `}
`;
const MenuArrow = styled.button<{ $low?: boolean }>`
  width: ${(q) => (q.$low ? 11 : 12)}px;
  height: 33px;
  padding: ${(q) => (q.$low ? 18 : 0)}px 0 0;
  flex: none;
  border: 0;
  background: none;
  display: grid;
  place-items: center;
`;
const Wide = styled.button<{ $w: number }>`
  width: ${(q) => q.$w}px;
  height: 33px;
  padding: 0;
  flex: none;
  border: 0;
  background: none;
  display: flex;
  align-items: center;
  justify-content: center;
  gap: 5px;
  white-space: nowrap;
  font: 13px/20px ${sans};
`;

function Arrow() {
  return (
    <svg width="6" height="4" viewBox="0 0 6 4" aria-hidden="true">
      <path d="M0 0H6L3 4Z" fill="#111" />
    </svg>
  );
}

const Combo = styled.label<{ $w: number }>`
  width: ${(q) => q.$w}px;
  height: 18px;
  flex: none;
  display: grid;
  grid-template-columns: 1fr 18px;
  background: #fff;
  border: 1px solid #7c8894;
  border-radius: 3px;
  overflow: hidden;
`;
const ComboSelect = styled.select`
  grid-area: 1 / 1 / 2 / 3;
  min-width: 0;
  padding: 0 0 0 1px;
  border: 0;
  appearance: none;
  background: transparent;
  font: 13px/16px ${sans};
  color: #111;
`;
const ComboArrow = styled.span`
  grid-area: 1 / 2;
  pointer-events: none;
  background: linear-gradient(#c8e4fc, #68a8e4);
  border-left: 1px solid #4c7cac;
  display: grid;
  place-items: center;
`;

function ComboBox({ label, options, width }: { label: string; options: string[]; width: number }) {
  return (
    <Combo $w={width}>
      <ComboSelect aria-label={label}>
        {options.map((o) => <option key={o}>{o}</option>)}
      </ComboSelect>
      <ComboArrow>
        <svg width="11" height="7" viewBox="0 0 11 7" aria-hidden="true"><path d="M0 0H11L5.5 7Z" fill="#0c1420" /></svg>
      </ComboArrow>
    </Combo>
  );
}

/* "|" is a divider, "v" a drop-down arrow, "_" the overflow arrow at the end of a bar */
function Tools({ items, children }: { items: string; children?: ReactNode }) {
  return (
    <Group>
      <Grip />
      {children}
      {items.split(' ').map((name, i) => {
        if (name === '|') return <Divider key={i} />;
        if (name === 'v') return <MenuArrow key={i} aria-label="更多"><Arrow /></MenuArrow>;
        if (name === '_') return <MenuArrow key={i} $low aria-label="工具栏选项"><Arrow /></MenuArrow>;
        return (
          <ToolButton key={i} aria-label={name} $framed={name === 'wheel'}>
            <Icon name={name} />
          </ToolButton>
        );
      })}
    </Group>
  );
}

const SelectionBar = styled.div`
  height: 29px;
  display: flex;
  align-items: center;
  padding: 0 3px 0 7px;
  background: linear-gradient(#c6c6c6, #dadada);
  border-bottom: 1px solid #f0f0f0;
  border-top: 1px solid #a4a4a4;
`;
const Gap = styled.span<{ $w: number }>`
  width: ${(q) => q.$w}px;
  flex: none;
`;
const Spacer = styled.span`
  flex: 1;
`;
const PromptBar = styled.div`
  height: 24px;
  display: flex;
  align-items: center;
  padding: 0 2px 0 4px;
  background: #d8d8d8;
  border-bottom: 1px solid #8c8c8c;
`;
const Prompt = styled.p`
  margin: 0;
  flex: 1;
  font: 700 14px/20px ${sans};
  white-space: pre;
`;
const ViewButton = styled.button<{ $dim?: boolean }>`
  width: 18px;
  height: 18px;
  padding: 0;
  border: 0;
  background: ${(q) => (q.$dim ? '#8c9698' : 'none')};
  display: grid;
  place-items: center;
`;
const ViewButtons = styled.div`
  display: flex;
  gap: 4px;
`;

/* ---------- work area ---------- */

const Work = styled.div`
  flex: 1;
  display: flex;
  min-height: 0;
`;
const Rail = styled.div`
  width: 36px;
  padding: 18px 0 0 6px;
  background: linear-gradient(90deg, #a4a4a4, #b4b4b4);
  display: flex;
  flex-direction: column;
  gap: 3px;
`;
const RailTab = styled.button<{ $active?: boolean; $apart?: boolean }>`
  height: 42px;
  padding: 0;
  margin: ${(q) => (q.$apart ? '12px 0 0' : '0')};
  flex: none;
  border: 1px solid #808080;
  border-right: 0;
  border-radius: 3px 0 0 3px;
  background: linear-gradient(90deg, #dedede, #d2d2d2);
  display: grid;
  place-items: center;
  ${(q) =>
    q.$active &&
    css`
      background: #ebebeb;
    `}
`;
const Panel = styled.section`
  width: 233px;
  padding: 6px 12px 5px 10px;
  display: flex;
  flex-direction: column;
  background: #ebebeb;
  border-right: 1px solid #6c6c6c;
  border-bottom: 1px solid #6c6c6c;
`;
const PanelHead = styled.header`
  height: 31px;
  padding: 0 0 2px 4px;
  display: flex;
  align-items: center;
  gap: 12px;
`;
const PanelTitle = styled.h2`
  margin: 0;
  font: 700 14px/20px ${sans};
`;
const TreeBox = styled.div`
  flex: 1;
  display: flex;
  flex-direction: column;
  border: 1px solid #707070;
  background: #fff;
`;
const ColumnHead = styled.div`
  height: 18px;
  padding: 0 7px;
  display: flex;
  align-items: center;
  gap: 16px;
  background: linear-gradient(#f0f0f0, #d4d4d4);
  border-bottom: 1px solid #a8a8a8;
`;
const TreeRows = styled.ul`
  flex: 1;
  margin: 0;
  padding: 0;
  list-style: none;
  display: grid;
  grid-auto-rows: minmax(18px, 1fr);
`;
const TreeRow = styled.li<{ $level: number; $dim?: boolean }>`
  min-height: 0;
  display: flex;
  align-items: center;
  padding-left: ${(q) => (q.$level === 2 ? 30 : 5)}px;
  color: ${(q) => (q.$dim ? '#a0a0a0' : '#333')};
  line-height: 17px;
  white-space: pre;
  overflow: hidden;
  border-bottom: 1px solid #ececec;
  &:nth-child(even) { background: #f5f5f5; }
`;
const Expander = styled.button`
  width: 10px;
  height: 10px;
  padding: 0;
  border: 1px solid #888;
  border-radius: 2px;
  background: #fff;
  display: grid;
  place-items: center;
`;
const Branch = styled.span<{ $w: number; $ends?: boolean }>`
  align-self: stretch;
  width: ${(q) => q.$w}px;
  background:
    linear-gradient(#aaa, #aaa) right center / ${(q) => q.$w}px 1px no-repeat,
    linear-gradient(#aaa, #aaa) left top / 1px ${(q) => (q.$ends ? '50%' : '100%')} no-repeat;
`;
const Leg = styled.span`
  width: 6px;
  border-top: 1px dotted #999;
`;
const IconSlot = styled.span`
  width: 17px;
  margin-right: 3px;
  display: grid;
  place-items: center;
  flex: none;
`;
const CheckWrap = styled.label`
  display: grid;
  margin-right: 2px;
  place-items: center;
`;
const Check = styled.input`
  grid-area: 1 / 1;
  width: 13px;
  height: 13px;
  margin: 0;
  appearance: none;
  background: #fff;
  border: 1px solid #222;
`;
const Tick = styled.svg`
  grid-area: 1 / 1;
  width: 11px;
  height: 11px;
  pointer-events: none;
`;
const ScrollTrack = styled.div`
  height: 22px;
  padding: 2px 5px;
  display: grid;
  grid-template-columns: 12px 1fr 12px;
  align-items: center;
  background: #f0f0f0;
`;
const ScrollButton = styled.button`
  padding: 0;
  border: 0;
  background: none;
  display: grid;
  place-items: center;
`;
const Thumb = styled.div`
  width: 63%;
  height: 16px;
  margin-left: 2px;
  background: #cdcdcd;
`;
const Splitter = styled.div`
  height: 12px;
  display: flex;
  align-items: center;
  gap: 4px;
  &::before, &::after { content: ''; flex: 1; height: 1px; background: #bcbcbc; }
`;
const Handle = styled.span`
  width: 35px;
  height: 5px;
  background: #d0d0d0;
  border-bottom: 1px solid #909090;
  border-right: 1px solid #909090;
`;
const Fold = styled.button`
  height: 24px;
  padding: 0 0 0 7px;
  flex: none;
  border: 0;
  border-bottom: 1px solid #a0a0a0;
  border-right: 1px solid #a0a0a0;
  background: linear-gradient(#f8f8f8, #e0e0e0);
  display: grid;
  grid-template-columns: 1fr 24px;
  align-items: center;
  text-align: left;
  font: 700 13px/20px ${sans};
`;
const FoldMark = styled.span`
  height: 100%;
  border-left: 1px solid #b0b0b0;
  display: grid;
  place-items: center;
`;
const CurveBar = styled.div`
  width: 36px;
  padding-top: 14px;
  background: linear-gradient(90deg, #d2d2d2, #cbcbcb);
  display: flex;
  flex-direction: column;
  gap: 7px;
`;
const SideArrow = styled.button`
  width: 24px;
  height: 12px;
  padding: 0;
  border: 0;
  background: none;
  text-align: left;
  line-height: 0;
`;

/* ---------- graphics view ---------- */

const View = styled.div`
  position: relative;
  flex: 1;
  min-width: 0;
  overflow: hidden;
  background: #000;
`;
const Overlay = styled.div<{ $x: number; $y: number }>`
  position: absolute;
  left: ${(q) => q.$x}px;
  top: ${(q) => q.$y}px;
  color: #f4f4f4;
  font-family: "Noto Sans CJK SC", sans-serif;
  white-space: nowrap;
  svg { display: block; overflow: visible; }
`;
const School = styled.div`
  font-size: 56px;
  line-height: 64px;
  font-weight: 500;
`;
const Courses = styled.div`
  display: flex;
  gap: 7px;
  font-size: 34px;
  line-height: 44px;
  font-weight: 350;
`;
const Slogan = styled.div`
  font-size: 33px;
  line-height: 44px;
`;
const BrandName = styled.div`
  font-size: 40px;
  line-height: 40px;
  font-weight: 700;
`;
const BrandLatin = styled.div`
  font: 700 14px/18px Lato, sans-serif;
`;

function Model() {
  const edge = '#e2604c';
  const groove = '#cc5240';
  return (
    <svg width="400" height="290" viewBox="0 0 1200 870" role="img" aria-label="体 (0)">
      <defs>
        <linearGradient id="skin" x1="0" y1="0" x2="1" y2=".1">
          <stop offset="0" stopColor="#ff7c64" />
          <stop offset=".22" stopColor="#ff735b" />
          <stop offset=".42" stopColor="#ff927c" />
          <stop offset=".62" stopColor="#ff8e78" />
          <stop offset=".76" stopColor="#ff6c52" />
          <stop offset=".9" stopColor="#ff8068" />
          <stop offset="1" stopColor="#ff6c54" />
        </linearGradient>
        <linearGradient id="inside" x1="0" y1="0" x2="1" y2="0">
          <stop offset="0" stopColor="#64281f" />
          <stop offset=".86" stopColor="#5a241c" />
          <stop offset="1" stopColor="#8c3a2e" />
        </linearGradient>
        <radialGradient id="halo">
          <stop offset="0" stopColor="#f56ab4" />
          <stop offset=".8" stopColor="#fb70a8" stopOpacity=".95" />
          <stop offset="1" stopColor="#fb70a8" stopOpacity=".3" />
        </radialGradient>
      </defs>
      <path d="M72 568L122 695L960 798Q1020 800 1035 740L1095 300L1050 210L980 600Z" fill="url(#inside)" />
      <path d="M1030 285L1095 298L1035 735L985 620Z" fill="#b24c3c" />
      <path d="M135 95Q148 54 195 57L400 88L560 95C700 100 850 112 1000 145Q1042 158 1055 205L1095 295L1035 285L990 610Q975 668 910 662L550 618L340 604L72 568Z" fill="url(#skin)" />
      <g fill="none" stroke={edge} strokeWidth="8" strokeLinejoin="round">
        <path d="M135 95Q148 54 195 57L400 88L560 95C700 100 850 112 1000 145Q1042 158 1055 205L1095 298L1035 740Q1015 800 960 798L122 695L72 568Z" />
        <path d="M72 568L340 604L550 618L910 662Q975 665 985 620L1032 735M137 580L124 690M907 665L958 795" />
      </g>
      <g fill="none" stroke={groove} strokeWidth="4">
        <path d="M205 68L258 186M140 120L188 238M1005 150Q1040 200 1045 285L1095 298M1045 285L1075 290" />
        <path d="M140 580L188 245Q200 186 260 186L400 204L1030 277L1000 480L985 620" />
        <path d="M405 90L372 340L335 600M430 92L398 340L358 604" strokeWidth="7" />
      </g>
      <g fill="none" stroke={groove}>
        <path d="M115 303L370 342M398 348L590 354Q640 358 690 368L870 388L1005 412" strokeWidth="12" />
        <path d="M115 318L370 352M398 362L690 378L1000 424" strokeWidth="4" />
        <path d="M535 615Q620 480 800 485Q900 485 995 515" strokeWidth="20" />
        <path d="M556 618Q640 510 800 500Q900 497 990 522" stroke="#ff9480" strokeWidth="8" />
        <path d="M568 620Q650 520 800 511Q900 508 988 532" strokeWidth="4" />
      </g>
      <circle cx="785" cy="370" r="92" fill="url(#halo)" />
      <path d="M693 355L875 378V398L693 378Z" fill="#b448c8" opacity=".6" />
      <path d="M575 178L583 235L563 300L548 335L560 250Z" fill="#289028" />
      <ellipse cx="546" cy="328" rx="11" ry="15" fill="#1c2890" />
      <g fontFamily='"Open Sans", sans-serif' fontSize="34">
        <text x="520" y="168" fill="#4f8c38">YC</text>
        <text x="543" y="311" fill="#2c48b0">ZC</text>
        <text x="684" y="414" fill="#e05868">XC</text>
      </g>
      <g fill="none">
        <circle cx="787" cy="371" r="38" stroke="#201018" strokeWidth="7" />
        <circle cx="787" cy="371" r="38" stroke="#fff" strokeWidth="4" />
        <path d="M787 321V421M738 371H837" stroke="#111" strokeWidth="12" />
        <path d="M787 325V417M742 371H833" stroke="#fff" strokeWidth="5" />
      </g>
    </svg>
  );
}

function Crown() {
  return (
    <svg width="116" height="108" viewBox="0 0 348 324" aria-hidden="true">
      <path d="M174 2Q180 30 206 39Q180 48 174 78Q168 48 142 39Q168 30 174 2Z" fill="none" stroke="#fff" strokeWidth="8" />
      <g fill="none" stroke="#fff" strokeWidth="28">
        <path d="M122 142L97 113L21 208L97 302H160" />
        <path d="M212 142L252 113L328 208L252 302H174L102 208L174 113L250 208L174 298" />
        <path d="M130 164L174 214L218 164" />
      </g>
      <path d="M112 230L172 322" stroke="#000" strokeWidth="6" />
    </svg>
  );
}

function Triad() {
  return (
    <svg width="84" height="82" viewBox="0 0 252 246" aria-hidden="true">
      <path d="M76 100L72 180" stroke="#1448f0" strokeWidth="10" />
      <path d="M60 172H84L70 210Z" fill="#1448f0" />
      <path d="M54 218H76L54 240H76" fill="none" stroke="#1830a8" strokeWidth="4" />
      <path d="M65 38L77 52L89 36M77 52L80 66" fill="none" stroke="#207030" strokeWidth="5" />
      <path d="M77 64L166 72L159 168L73 158Z" fill="#a4a4a4" stroke="#c0c0c0" strokeWidth="5" />
      <path d="M92 86L168 90" stroke="#c07070" strokeWidth="4" />
      <path d="M166 86L200 88V82L226 95L200 103V97L166 94Z" fill="#f03028" />
      <path d="M226 86L240 110M242 88L226 108" stroke="#802020" strokeWidth="4" />
    </svg>
  );
}

const BottomBar = styled.footer`
  height: 36px;
  display: flex;
  padding-left: 173px;
  background: linear-gradient(#e6e6e6, #cfcfcf);
`;

/* ---------- data ---------- */

const menus: [string, string, string?][] = [
  ['文件', 'F'], ['编辑', 'E'], ['视图', 'V'], ['插入', 'S'], ['格式', 'R'], ['工具', 'T'], ['装配', 'A'],
  ['信息', 'I'], ['分析', 'L'], ['首选项', 'P'], ['浩强工具', '', 'v2.58'], ['窗口', 'O'],
  ['GC 工具箱', '', ''], ['星空', '', ' V6.935F'], ['帮助', 'H'],
];

type Row = { text: string; icon: string; level: number; mark?: '+' | '-'; tick?: boolean; dim?: boolean; last?: boolean };
const rows: Row[] = [
  { text: '历史记录模式', icon: 'rClock', level: 1 },
  { text: '模型视图', icon: 'tViews', level: 1, mark: '+' },
  { text: '摄像机', icon: 'tCamera', level: 1, mark: '+', tick: true },
  { text: '用户表达式', icon: 'tExpr', level: 1, mark: '+' },
  { text: '模型历史记录', icon: 'tFolder', level: 1, mark: '-' },
  { text: '体 (0)', icon: 'tBody', level: 2 },
  { text: '体 (1)', icon: 'tBody', level: 2, dim: true },
  { text: '体 (3)', icon: 'tBody', level: 2, dim: true, last: true },
];
const emptyRows = 23;

const rail = ['rAssembly', 'rConstraint', 'rPart', 'rBooks', 'rInfo', 'rWeb', 'rClock', 'rList', 'rRainbow', 'rBuild', 'rUsers', 'rPhoto'];
const snaps: [string, boolean][] = [
  ['mFlag', true], ['mGlobe', false], ['mEnd', true], ['mMid', true], ['mCurve', false], ['mCross', false],
  ['mCenter', true], ['mQuad', false], ['mPoint', true], ['mOn', true], ['mFace', false],
];

function SmallTool({ name, size = 20 }: { name: string; size?: number }) {
  return <ToolButton $w={24} aria-label={name}><Icon name={name} size={size} /></ToolButton>;
}

function TreeItem({ row }: { row: Row }) {
  return (
    <TreeRow $level={row.level} $dim={row.dim}>
      {row.level === 1 ? (
        row.mark ? (
          <>
            <Expander aria-label={row.text}>
              <svg width="6" height="6" viewBox="0 0 6 6" aria-hidden="true">
                <path d={row.mark === '+' ? 'M0 3H6M3 0V6' : 'M0 3H6'} stroke="#333" />
              </svg>
            </Expander>
            <Leg />
          </>
        ) : (
          <><Gap $w={5} /><Branch $w={11} /></>
        )
      ) : (
        <>
          <Branch $w={10} $ends={row.last} />
          <Gap $w={3} />
          <CheckWrap>
            <Check type="checkbox" defaultChecked aria-label={row.text} />
            <Tick viewBox="0 0 11 11" aria-hidden="true"><path d="M1 5L4 9L10 2" fill="none" stroke="#18a030" strokeWidth="2.6" /></Tick>
          </CheckWrap>
        </>
      )}
      {row.tick && <Icon name="tTick" size={14} />}
      <IconSlot><Icon name={row.icon} size={17} /></IconSlot>
      {row.level === 2 ? <span>体<Latin> </Latin>{row.text.slice(2)}</span> : row.text}
    </TreeRow>
  );
}

export default function App() {
  return (
    <Stage>
      <GlobalStyle />
      <Gradients />
      <Frame>
        <TitleBar>
          <Icon name="logo" size={17} />
          <Title>NX 8 - 建模 - [_model2.prt （修改的） ]</Title>
          <Brand>SIEMENS</Brand>
          <FrameButtons>
            <FrameButton aria-label="最小化"><svg width="8" height="10" viewBox="0 0 8 10"><path d="M0 8H8" stroke="#fff" strokeWidth="3" /></svg></FrameButton>
            <FrameButton aria-label="最大化"><svg width="12" height="12" viewBox="0 0 12 12"><path d="M1 1H11V11H1ZM1 3H11" stroke="#e8e8e8" strokeWidth="2" fill="none" /></svg></FrameButton>
            <FrameButton aria-label="关闭"><svg width="12" height="12" viewBox="0 0 12 12"><path d="M1 1L11 11M11 1L1 11" stroke="#fff" strokeWidth="2.4" /></svg></FrameButton>
          </FrameButtons>
        </TitleBar>

        <MenuBar>
          <Grip />
          <Icon name="part" size={17} />
          <Menus>
            {menus.map(([label, key, tail]) => (
              <li key={label}>
                <MenuButton>
                  {label.startsWith('GC') ? <><Latin>GC </Latin>工具箱</> : label}
                  {key && <Latin>(<u>{key}</u>)</Latin>}
                  {tail && <Latin>{tail}</Latin>}
                </MenuButton>
              </li>
            ))}
          </Menus>
          <DocButtons>
            <DocButton aria-label="最小化窗口"><svg width="8" height="8" viewBox="0 0 8 8"><path d="M0 7H8" stroke="#666" strokeWidth="2" /></svg></DocButton>
            <DocButton aria-label="还原窗口"><svg width="10" height="10" viewBox="0 0 10 10"><path d="M3 3V1H9V6H7M1 4H7V9H1Z" stroke="#666" strokeWidth="1.6" fill="none" /></svg></DocButton>
            <DocButton aria-label="关闭窗口"><svg width="10" height="10" viewBox="0 0 10 10"><path d="M1 1L9 9M9 1L1 9" stroke="#555" strokeWidth="2.4" /></svg></DocButton>
          </DocButtons>
        </MenuBar>

        <ToolRow>
          <Tools items="file open save | undo redo |">
            <Wide $w={71}><Icon name="start" />开始<Arrow /></Wide>
          </Tools>
          <FinderBar />
          <Gap $w={11} />
          <Tools items="fit v fit zoomWindow zoom pan rotate rotateTarget | doorFlag door _" />
          <Tools items="extract boxRed pocket dims yellowPart greenBar greenRect _" />
          <Tools items="layers | handDiamond palette | grid gridSnap | ruler angle _">
            <Gap $w={4} />
            <ComboBox label="工作图层" options={['2']} width={41} />
            <Gap $w={6} />
          </Tools>
        </ToolRow>

        <ToolRow $indent={15}>
          <Tools items="plane4 surfRuled surfMesh surfN surfSwept surfBlend surfGrid _" />
          <Gap $w={26} />
          <Tools items="cubeMove cubeCopy cubeList cubeDelete cubeWand v _" />
          <Tools items="datum v extrude revolve | tray v tray stamp chain unite v rib splitBox v splitBox sheet book slab clipBox bend offset dome | blend v blend fillet fillet chamfer cubePlane _" />
        </ToolRow>

        <ToolRow $sunk $indent={1}>
          <Tools items="plunge brush sheetBox mirror subtract align spindle spindles wheel clampName clampCheck clampTree clampBox clampGear clampA clampWrench clampWindow windowStar clampTable clampText clampReturn icam twin name _" />
          <Tools items="dxf open _" />
        </ToolRow>

        <SelectionBar>
          <ComboBox label="类型过滤器" options={['没有选择过滤器']} width={117} />
          <Gap $w={8} />
          <ComboBox label="选择范围" options={['整个装配']} width={124} />
          <Gap $w={5} />
          <SmallTool name="sLink" />
          <Divider $h={24} />
          <SmallTool name="sSnap" />
          <MenuArrow aria-label="更多"><Arrow /></MenuArrow>
          {['sReturn', 'sSolid', 'sMove', 'sGun'].map((n) => <SmallTool key={n} name={n} size={18} />)}
          <Divider $h={24} />
          <SmallTool name="sMarquee" />
          <MenuArrow aria-label="更多"><Arrow /></MenuArrow>
          <Gap $w={8} />
          {snaps.map(([n, on]) => (
            <ToolButton key={n} $w={24} $pressed={on} aria-pressed={on} aria-label={n}><Icon name={n} size={18} /></ToolButton>
          ))}
          <Gap $w={6} />
          <Divider $h={24} />
          <SmallTool name="mBox" />
          <Spacer />
          <MenuArrow $low aria-label="工具栏选项"><Arrow /></MenuArrow>
        </SelectionBar>

        <PromptBar>
          <Prompt>选择对象并使用<Latin> MB3</Latin>，或者双击某一对象</Prompt>
          <ViewButtons>
            <ViewButton $dim aria-label="状态" />
            <ViewButton aria-label="全屏">
              <svg width="16" height="16" viewBox="0 0 16 16"><path d="M1 4V1H4M12 1H15V4M15 12V15H12M4 15H1V12" stroke="#505860" strokeWidth="1.6" fill="none" /><path d="M3 4H13V12H3Z" fill="#c8e4fc" stroke="#505860" /><path d="M5 6H11V10H5Z" fill="#2c7cc8" /></svg>
            </ViewButton>
          </ViewButtons>
        </PromptBar>

        <Work>
          <Rail>
            {rail.map((n, i) => (
              <RailTab key={n} $active={i === 2} $apart={i >= 4 && i <= 6} aria-label={n}><Icon name={n} /></RailTab>
            ))}
          </Rail>

          <Panel>
            <PanelHead>
              <Icon name="pin" size={15} />
              <PanelTitle>部件导航器</PanelTitle>
            </PanelHead>
            <TreeBox>
              <ColumnHead>
                名称
                <svg width="11" height="7" viewBox="0 0 11 7" aria-hidden="true"><path d="M0 7H11L5.5 0Z" fill="#222" /></svg>
              </ColumnHead>
              <TreeRows>
                {rows.map((r) => <TreeItem key={r.text} row={r} />)}
                {Array.from({ length: emptyRows }, (_, i) => <TreeRow key={i} $level={1} aria-hidden="true" />)}
              </TreeRows>
              <ScrollTrack>
                <ScrollButton aria-label="向左"><svg width="6" height="9" viewBox="0 0 6 9"><path d="M5 0L1 4.5L5 9" fill="none" stroke="#555" strokeWidth="2" /></svg></ScrollButton>
                <Thumb />
                <ScrollButton aria-label="向右"><svg width="6" height="9" viewBox="0 0 6 9"><path d="M1 0L5 4.5L1 9" fill="none" stroke="#555" strokeWidth="2" /></svg></ScrollButton>
              </ScrollTrack>
            </TreeBox>
            <Splitter><Handle /></Splitter>
            {['相依性', '细节', '预览'].map((s) => (
              <Fold key={s}>
                {s}
                <FoldMark><svg width="13" height="11" viewBox="0 0 13 11" aria-hidden="true"><path d="M1 1L6.5 9L12 1" fill="none" stroke="#606060" strokeWidth="2.6" /></svg></FoldMark>
              </Fold>
            ))}
          </Panel>

          <CurveBar>
            <CurveGroup names={['vCircle', 'vLine', 'vArc', 'vRect', 'vSpline', 'vText', 'vOffset', 'vBridge', 'vJoin', 'vSplit', 'vProject', 'vIntersect', 'vWrap']} />
            <CurveGroup names={['vTrim1', 'vTrim2', 'vTrim3', 'vTrim4']} />
          </CurveBar>

          <View>
            <Overlay $x={52} $y={36}>
              <School>点冠学院</School>
            </Overlay>
            <Overlay $x={32} $y={103}>
              <Courses><span>UG绘图</span><span>造型</span><span>编程</span></Courses>
            </Overlay>
            <Overlay $x={437} $y={224}><Model /></Overlay>
            <Overlay $x={138} $y={613}><Crown /></Overlay>
            <Overlay $x={115} $y={724}>
              <BrandName>点冠教育</BrandName>
              <BrandLatin>DIANGUAN EDUCATION</BrandLatin>
            </Overlay>
            <Overlay $x={37} $y={734}><Triad /></Overlay>
            <Overlay $x={320} $y={723}><Slogan>没有攀登不上的高峰，只有不努力的人！</Slogan></Overlay>
          </View>
        </Work>

        <BottomBar>
          <Tools items="bCsys dims bLayers bLeft bRight bSwap bSquares bTower bMeasure bCubeFrame bRadius bBoxLines bPlate bStripes bInfo bTube boxRed bPlane bCut bMid bRect v bHex v bXyz bTarget bHole bText bWire bLamp bCircle _" />
        </BottomBar>
      </Frame>
    </Stage>
  );
}

function FinderBar() {
  return (
    <Group>
      <Wide $w={98}><Icon name="binoculars" size={22} />命令查找器</Wide>
      <MenuArrow $low aria-label="工具栏选项"><Arrow /></MenuArrow>
    </Group>
  );
}

function CurveGroup({ names }: { names: string[] }) {
  return (
    <Group $vertical>
      <Grip $vertical />
      {names.map((n) => <ToolButton key={n} aria-label={n}><Icon name={n} /></ToolButton>)}
      <SideArrow aria-label="工具栏选项"><svg width="4" height="6" viewBox="0 0 4 6"><path d="M4 0V6L0 3Z" fill="#111" /></svg></SideArrow>
    </Group>
  );
}
